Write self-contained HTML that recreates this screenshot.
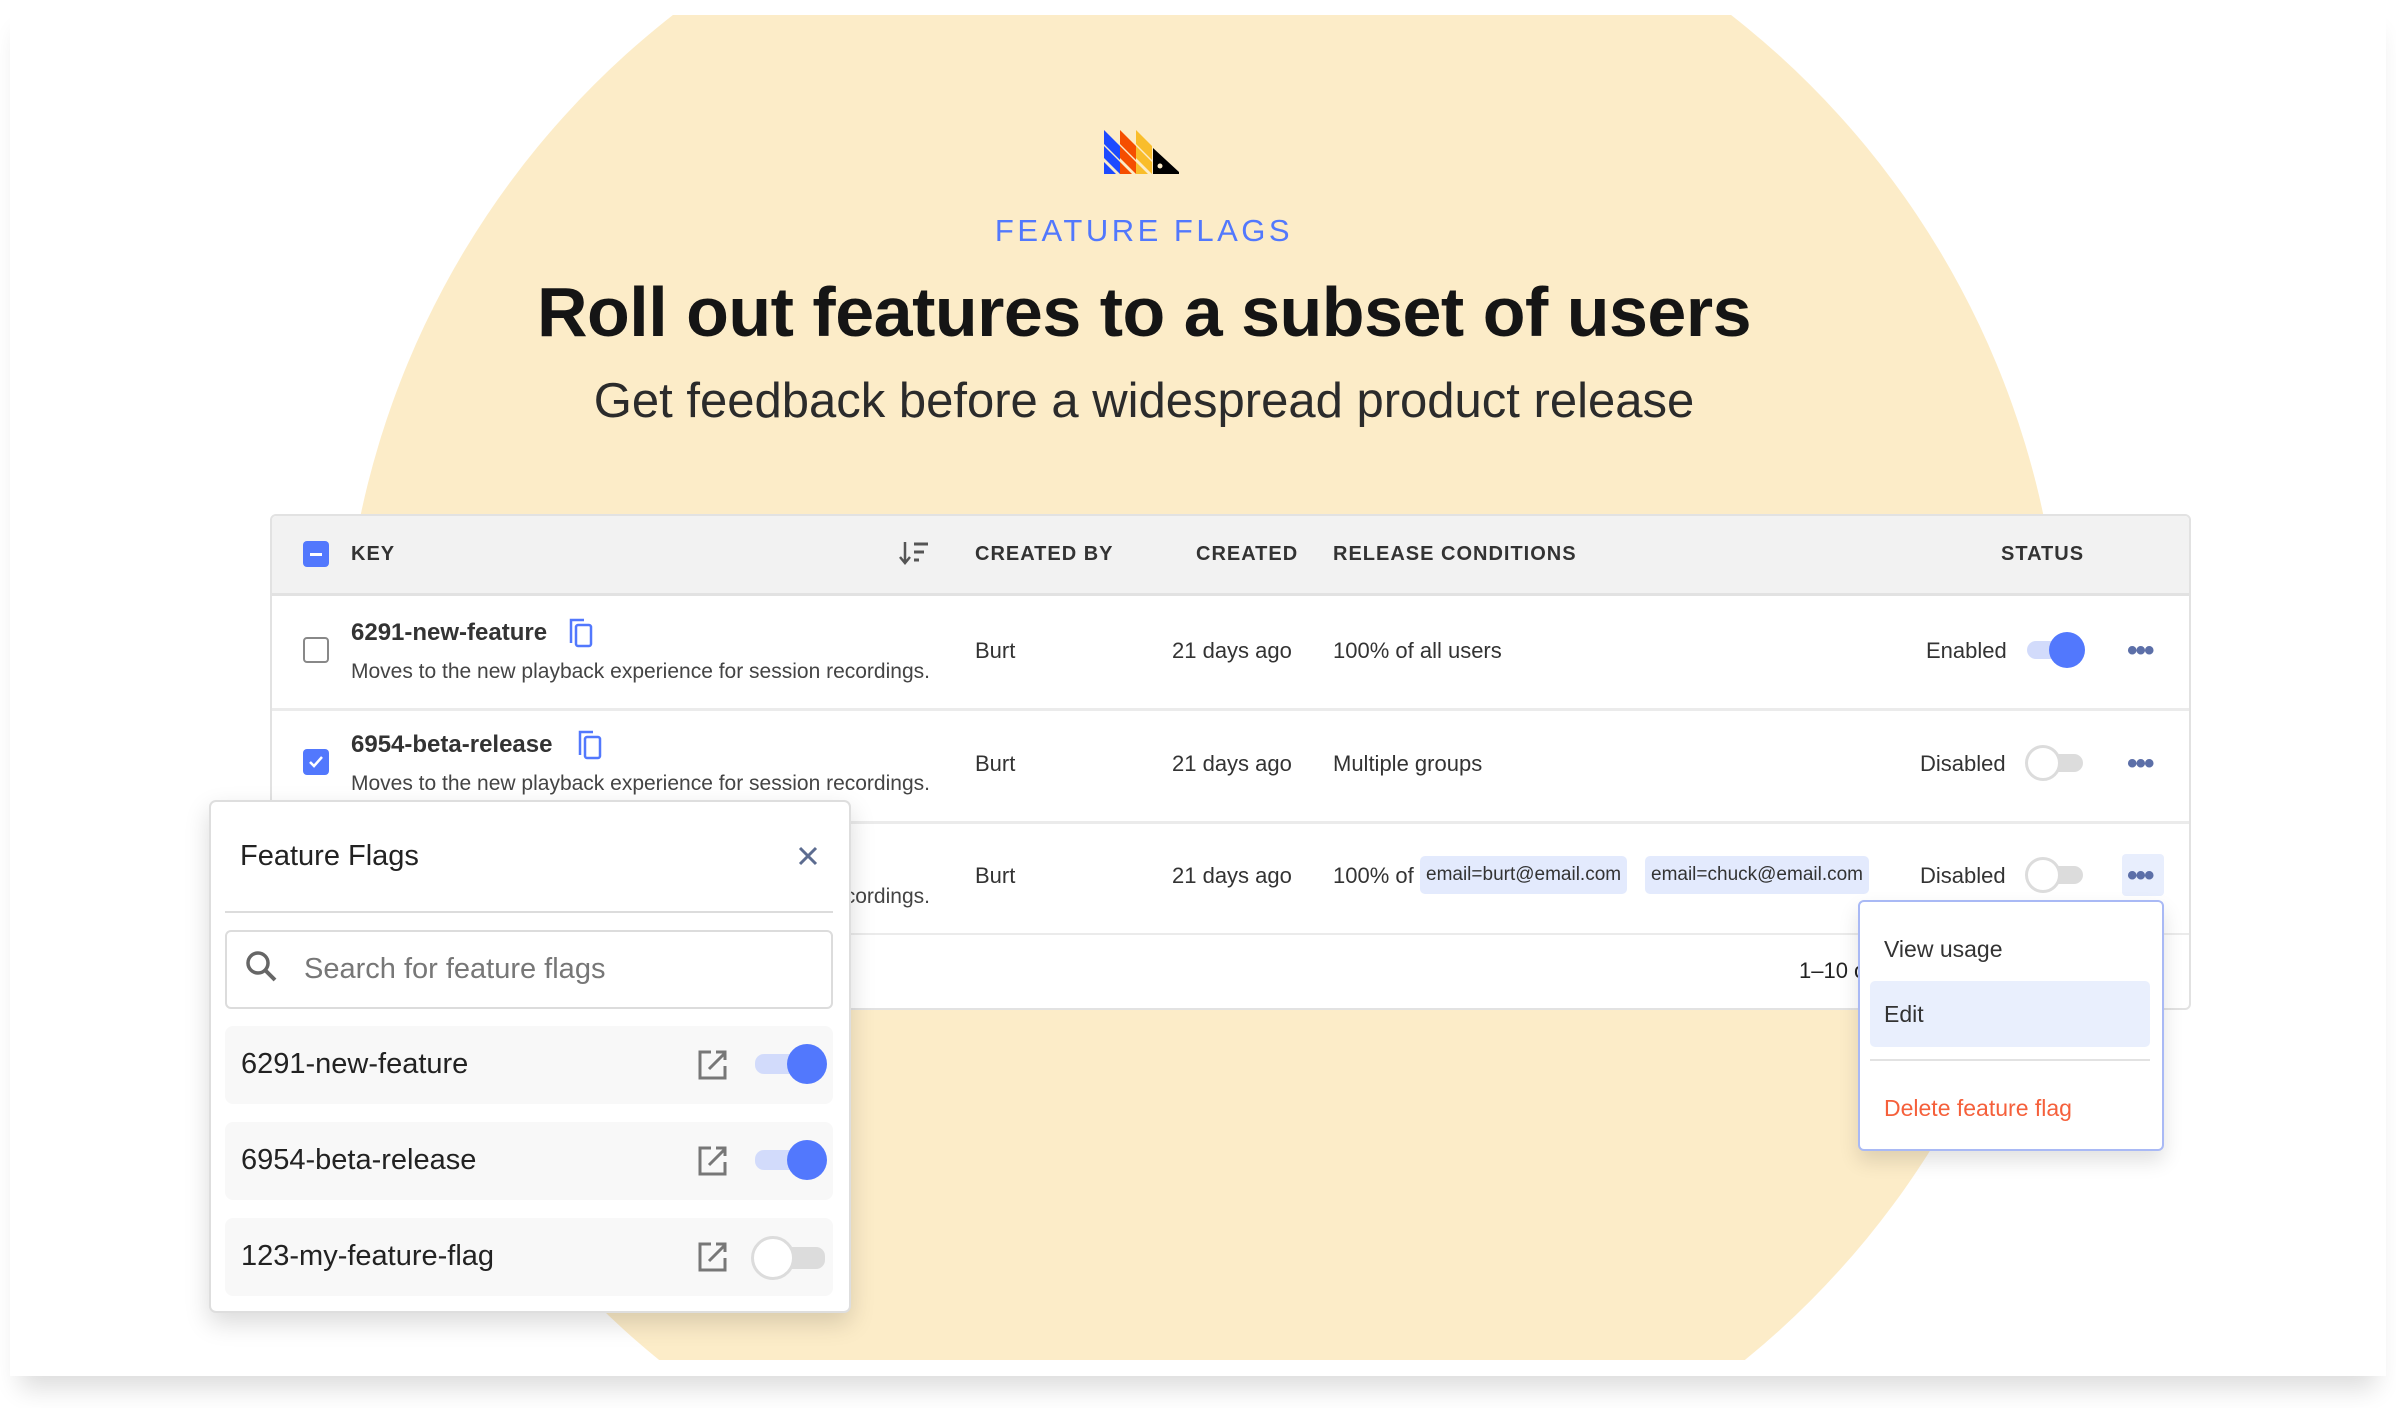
<!DOCTYPE html>
<html><head><meta charset="utf-8"><style>
*{margin:0;padding:0;box-sizing:border-box}
body{width:2396px;height:1408px;background:#fff;position:relative;overflow:hidden;font-family:"Liberation Sans",sans-serif;color:#222}
.a{position:absolute}
.card{left:10px;top:0;width:2376px;height:1376px;background:#fff;box-shadow:0 22px 24px -10px rgba(0,0,0,.14)}
.clip{left:0;top:15px;width:2396px;height:1345px;overflow:hidden}
.circle{left:342px;top:-182px;width:1720px;height:1720px;border-radius:50%;background:#fcecc8}
.c{text-align:center;left:0;width:2288px}
.th{font-size:20px;font-weight:bold;letter-spacing:1px;color:#333}
.tog{position:absolute;width:60px;height:36px}
.tog .tr{position:absolute;left:2px;top:9px;width:56px;height:18px;border-radius:9px}
.tog .kn{position:absolute;top:0;width:36px;height:36px;border-radius:50%}
.on .tr{background:#d2dbfb}.on .kn{right:0;background:#5278fd}
.off .tr{background:#dcdcdc}.off .kn{left:0;background:#fff;border:3px solid #dcdcdc}
.dots{position:absolute;font-size:30px;color:#5c6fa8;letter-spacing:-2px;font-weight:bold}
.rowtxt{font-size:22px;color:#333}
.desc{font-size:21px;color:#444}
.key{font-size:24px;font-weight:bold;color:#333}
.chip{position:absolute;background:#e3eafd;border-radius:5px;font-size:19px;color:#333;padding:0 6px;height:38px;line-height:38px}
.item{position:absolute;left:225px;width:608px;height:78px;background:#f8f8f8;border-radius:8px}
.item span{position:absolute;left:16px;top:22px;font-size:29px;color:#222}
</style></head><body>
<div class="a card"></div>
<div class="a clip"><div class="a circle"></div></div>

<svg class="a" style="left:1104px;top:130px" width="78" height="46" viewBox="0 0 78 46">
<g fill="#1d4aff"><path d="M0 0 L16 16 V30 L0 14Z"/><path d="M0 16 L16 32 V44 L0 28Z"/><path d="M0 32 L12 44 H0Z"/></g>
<g fill="#f54e00"><path d="M16 0 L32 16 V30 L16 14Z"/><path d="M16 16 L32 32 V44 L16 28Z"/><path d="M16 32 L28 44 H16Z"/></g>
<g fill="#f9bd2b"><path d="M32 0 L48 16 V30 L32 14Z"/><path d="M32 16 L48 32 V44 L32 28Z"/><path d="M32 32 L44 44 H32Z"/></g>
<path d="M49 18 L75 42 V44 H49Z" fill="#000"/><circle cx="56" cy="36" r="2.5" fill="#fcecc8"/>
</svg>
<div class="a c" style="top:213px;font-size:31px;letter-spacing:3.5px;color:#5278fd">FEATURE FLAGS</div>
<div class="a c" style="top:272px;font-size:70px;font-weight:bold;color:#151515;letter-spacing:-0.5px">Roll out features to a subset of users</div>
<div class="a c" style="top:373px;font-size:49px;color:#2b2b2b">Get feedback before a widespread product release</div>

<!-- table -->
<div class="a" style="left:270px;top:514px;width:1921px;height:496px;background:#fff;border:2px solid #e2e2e2;border-radius:6px;overflow:hidden">
 <div class="a" style="left:0;top:0;width:1920px;height:80px;background:#f2f2f2;border-bottom:3px solid #e2e2e2"></div>
 <div class="a" style="left:0;top:192px;width:1920px;height:3px;background:#ebebeb"></div>
 <div class="a" style="left:0;top:305px;width:1920px;height:3px;background:#ebebeb"></div>
 <div class="a" style="left:0;top:417px;width:1920px;height:2px;background:#ebebeb"></div>
</div>
<div class="a" style="left:303px;top:541px;width:26px;height:26px;border-radius:4px;background:#5278fd"><div class="a" style="left:7px;top:12px;width:12px;height:3px;background:#fff"></div></div>
<div class="a th" style="left:351px;top:543px">KEY</div>
<svg class="a" style="left:898px;top:540px" width="36" height="26"><path d="M7 2V22M2 17L7 23L12 17" stroke="#555" stroke-width="2.5" fill="none"/><path d="M16 4H30M16 12H26M16 20H21" stroke="#555" stroke-width="3"/></svg>
<div class="a th" style="left:975px;top:543px">CREATED BY</div>
<div class="a th" style="left:1196px;top:543px">CREATED</div>
<div class="a th" style="left:1333px;top:543px">RELEASE CONDITIONS</div>
<div class="a th" style="left:2001px;top:543px">STATUS</div>

<!-- row1 -->
<div class="a" style="left:303px;top:637px;width:26px;height:26px;border:2.5px solid #888;border-radius:4px"></div>
<div class="a key" style="left:351px;top:619px">6291-new-feature</div>
<svg class="a" style="left:567px;top:617px" width="30" height="32"><path d="M4 26V3H17" stroke="#5278fd" stroke-width="2.5" fill="none"/><rect x="9" y="8" width="15" height="21" rx="2" stroke="#5278fd" stroke-width="2.5" fill="none"/></svg>
<div class="a desc" style="left:351px;top:660px">Moves to the new playback experience for session recordings.</div>
<div class="a rowtxt" style="left:975px;top:638px">Burt</div>
<div class="a rowtxt" style="left:1172px;top:638px">21 days ago</div>
<div class="a rowtxt" style="left:1333px;top:638px">100% of all users</div>
<div class="a rowtxt" style="left:1926px;top:638px">Enabled</div>
<div class="tog on" style="left:2025px;top:632px"><div class="tr"></div><div class="kn"></div></div>
<div class="dots" style="left:2127px;top:634px">•••</div>

<!-- row2 -->
<div class="a" style="left:303px;top:749px;width:26px;height:26px;border-radius:4px;background:#5278fd"><svg width="26" height="26"><path d="M7 13L11 17L19 8" stroke="#fff" stroke-width="2.5" fill="none"/></svg></div>
<div class="a key" style="left:351px;top:731px">6954-beta-release</div>
<svg class="a" style="left:576px;top:729px" width="30" height="32"><path d="M4 26V3H17" stroke="#5278fd" stroke-width="2.5" fill="none"/><rect x="9" y="8" width="15" height="21" rx="2" stroke="#5278fd" stroke-width="2.5" fill="none"/></svg>
<div class="a desc" style="left:351px;top:772px">Moves to the new playback experience for session recordings.</div>
<div class="a rowtxt" style="left:975px;top:751px">Burt</div>
<div class="a rowtxt" style="left:1172px;top:751px">21 days ago</div>
<div class="a rowtxt" style="left:1333px;top:751px">Multiple groups</div>
<div class="a rowtxt" style="left:1920px;top:751px">Disabled</div>
<div class="tog off" style="left:2025px;top:745px"><div class="tr"></div><div class="kn"></div></div>
<div class="dots" style="left:2127px;top:747px">•••</div>

<!-- row3 -->
<div class="a desc" style="left:351px;top:885px">Moves to the new playback experience for session recordings.</div>
<div class="a rowtxt" style="left:975px;top:863px">Burt</div>
<div class="a rowtxt" style="left:1172px;top:863px">21 days ago</div>
<div class="a rowtxt" style="left:1333px;top:863px">100% of</div>
<div class="chip" style="left:1420px;top:856px">email=burt@email.com</div>
<div class="chip" style="left:1645px;top:856px">email=chuck@email.com</div>
<div class="a rowtxt" style="left:1920px;top:863px">Disabled</div>
<div class="tog off" style="left:2025px;top:857px"><div class="tr"></div><div class="kn"></div></div>
<div class="a" style="left:2122px;top:854px;width:42px;height:42px;background:#e8eefd;border-radius:4px"></div>
<div class="dots" style="left:2127px;top:859px">•••</div>
<div class="a rowtxt" style="left:1799px;top:958px;color:#222">1–10 of</div>

<!-- dropdown -->
<div class="a" style="left:1858px;top:900px;width:306px;height:251px;background:#fff;border:2.5px solid #a9b9f5;border-radius:6px;box-shadow:0 10px 20px rgba(0,0,0,.12)">
 <div class="a" style="left:24px;top:34px;font-size:23px;color:#333">View usage</div>
 <div class="a" style="left:10px;top:79px;width:280px;height:66px;background:#e9effd;border-radius:5px"></div>
 <div class="a" style="left:24px;top:99px;font-size:23px;color:#333">Edit</div>
 <div class="a" style="left:10px;top:157px;width:280px;height:2px;background:#e2e2e2"></div>
 <div class="a" style="left:24px;top:193px;font-size:23px;color:#f5603b">Delete feature flag</div>
</div>

<!-- panel -->
<div class="a" style="left:209px;top:800px;width:642px;height:513px;background:#fff;border:2px solid #dedede;border-radius:7px;box-shadow:0 10px 25px rgba(0,0,0,.15)"></div>
<div class="a" style="left:240px;top:840px;font-size:29px;color:#222">Feature Flags</div>
<svg class="a" style="left:797px;top:845px" width="22" height="22"><path d="M3 3L19 19M19 3L3 19" stroke="#5c6c90" stroke-width="3"/></svg>
<div class="a" style="left:225px;top:911px;width:608px;height:2px;background:#dcdcdc"></div>
<div class="a" style="left:225px;top:930px;width:608px;height:79px;border:2px solid #dcdcdc;border-radius:6px"></div>
<svg class="a" style="left:244px;top:949px" width="36" height="36"><circle cx="14" cy="14" r="10" stroke="#666" stroke-width="3.5" fill="none"/><path d="M21 21L31 31" stroke="#666" stroke-width="4"/></svg>
<div class="a" style="left:304px;top:953px;font-size:29px;color:#777">Search for feature flags</div>

<div class="item" style="top:1026px"><span>6291-new-feature</span></div>
<div class="item" style="top:1122px"><span>6954-beta-release</span></div>
<div class="item" style="top:1218px"><span>123-my-feature-flag</span></div>
<svg class="a" style="left:697px;top:1048px" width="32" height="34"><path d="M14 4H3V30H28V18" stroke="#777" stroke-width="3" fill="none"/><path d="M12 21L28 5M19 4H28V12" stroke="#777" stroke-width="3" fill="none"/></svg>
<svg class="a" style="left:697px;top:1144px" width="32" height="34"><path d="M14 4H3V30H28V18" stroke="#777" stroke-width="3" fill="none"/><path d="M12 21L28 5M19 4H28V12" stroke="#777" stroke-width="3" fill="none"/></svg>
<svg class="a" style="left:697px;top:1240px" width="32" height="34"><path d="M14 4H3V30H28V18" stroke="#777" stroke-width="3" fill="none"/><path d="M12 21L28 5M19 4H28V12" stroke="#777" stroke-width="3" fill="none"/></svg>
<div class="tog on" style="left:753px;top:1044px;width:74px;height:40px"><div class="tr" style="width:70px;height:20px;top:10px"></div><div class="kn" style="width:40px;height:40px"></div></div>
<div class="tog on" style="left:753px;top:1140px;width:74px;height:40px"><div class="tr" style="width:70px;height:20px;top:10px"></div><div class="kn" style="width:40px;height:40px"></div></div>
<div class="tog off" style="left:751px;top:1236px;width:76px;height:44px"><div class="tr" style="width:72px;height:22px;top:11px"></div><div class="kn" style="width:44px;height:44px"></div></div>
</body></html>
